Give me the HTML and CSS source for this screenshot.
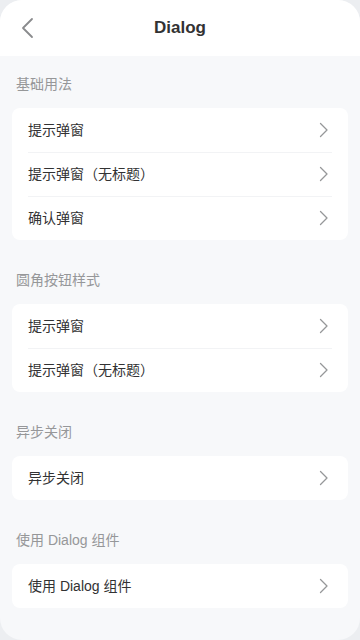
FILE: index.html
```html
<!DOCTYPE html>
<html lang="zh-CN">
<head>
<meta charset="utf-8">
<meta name="viewport" content="width=360, initial-scale=1">
<title>Dialog</title>
<link rel="stylesheet" href="styles.css">
</head>
<body>
<div class="screen">
  <header class="nav">
    <span class="nav-back">
      <svg width="14" height="22" viewBox="0 0 14 22"><polyline points="11,2 2,11 11,20" fill="none" stroke="#8a8b8d" stroke-width="1.8" stroke-linecap="round" stroke-linejoin="round"/></svg>
    </span>
    <h1 class="nav-title">Dialog</h1>
  </header>
  <main class="content">
    <section class="block first">
      <h2 class="block-title">基础用法</h2>
      <div class="group">
        <div class="cell"><span class="cell-text">提示弹窗</span><svg class="arrow" width="16" height="16" viewBox="0 0 16 16"><polyline points="4.5,1.5 11,8 4.5,14.5" fill="none" stroke="#969799" stroke-width="1.3" stroke-linecap="round" stroke-linejoin="round"/></svg></div>
        <div class="cell"><span class="cell-text">提示弹窗（无标题）</span><svg class="arrow" width="16" height="16" viewBox="0 0 16 16"><polyline points="4.5,1.5 11,8 4.5,14.5" fill="none" stroke="#969799" stroke-width="1.3" stroke-linecap="round" stroke-linejoin="round"/></svg></div>
        <div class="cell"><span class="cell-text">确认弹窗</span><svg class="arrow" width="16" height="16" viewBox="0 0 16 16"><polyline points="4.5,1.5 11,8 4.5,14.5" fill="none" stroke="#969799" stroke-width="1.3" stroke-linecap="round" stroke-linejoin="round"/></svg></div>
      </div>
    </section>
    <section class="block">
      <h2 class="block-title">圆角按钮样式</h2>
      <div class="group">
        <div class="cell"><span class="cell-text">提示弹窗</span><svg class="arrow" width="16" height="16" viewBox="0 0 16 16"><polyline points="4.5,1.5 11,8 4.5,14.5" fill="none" stroke="#969799" stroke-width="1.3" stroke-linecap="round" stroke-linejoin="round"/></svg></div>
        <div class="cell"><span class="cell-text">提示弹窗（无标题）</span><svg class="arrow" width="16" height="16" viewBox="0 0 16 16"><polyline points="4.5,1.5 11,8 4.5,14.5" fill="none" stroke="#969799" stroke-width="1.3" stroke-linecap="round" stroke-linejoin="round"/></svg></div>
      </div>
    </section>
    <section class="block">
      <h2 class="block-title">异步关闭</h2>
      <div class="group">
        <div class="cell"><span class="cell-text">异步关闭</span><svg class="arrow" width="16" height="16" viewBox="0 0 16 16"><polyline points="4.5,1.5 11,8 4.5,14.5" fill="none" stroke="#969799" stroke-width="1.3" stroke-linecap="round" stroke-linejoin="round"/></svg></div>
      </div>
    </section>
    <section class="block">
      <h2 class="block-title">使用 Dialog 组件</h2>
      <div class="group">
        <div class="cell"><span class="cell-text">使用 Dialog 组件</span><svg class="arrow" width="16" height="16" viewBox="0 0 16 16"><polyline points="4.5,1.5 11,8 4.5,14.5" fill="none" stroke="#969799" stroke-width="1.3" stroke-linecap="round" stroke-linejoin="round"/></svg></div>
      </div>
    </section>
  </main>
</div>
</body>
</html>
```
FILE: styles.css
```css
html, body {
  margin: 0;
  padding: 0;
  background: #eceef1;
}
body {
  font-family: "Liberation Sans", "Noto Sans CJK SC", sans-serif;
  -webkit-font-smoothing: antialiased;
}
.screen {
  width: 360px;
  height: 640px;
  background: #f7f8fa;
  border-radius: 22px;
  overflow: hidden;
  display: flex;
  flex-direction: column;
}
.nav {
  height: 56px;
  flex: none;
  background: #fff;
  display: flex;
  align-items: center;
  justify-content: center;
  position: relative;
}
.nav-back {
  position: absolute;
  left: 21px;
  top: 17px;
  display: flex;
}
.nav-title {
  margin: 0;
  font-size: 17px;
  font-weight: 700;
  color: #323233;
  line-height: 24px;
  padding-top: 0;
}
.content {
  flex: 1;
}
.block-title {
  margin: 0;
  padding: 32px 16px 16px;
  font-size: 14px;
  font-weight: 400;
  line-height: 16px;
  color: #969799;
}
.block.first .block-title {
  padding-top: 20px;
}
.group {
  margin: 0 12px;
  background: #fff;
  border-radius: 8px;
  overflow: hidden;
}
.cell {
  position: relative;
  display: flex;
  align-items: center;
  height: 44px;
  padding: 0 16px;
  box-sizing: border-box;
  font-size: 14px;
  color: #323233;
}
.cell + .cell::before {
  content: "";
  position: absolute;
  left: 16px;
  right: 16px;
  top: 0;
  border-top: 1px solid #f2f3f5;
}
.cell-text {
  flex: 1;
  line-height: 24px;
}
.arrow {
  flex: none;
  margin-left: 4px;
}
```
